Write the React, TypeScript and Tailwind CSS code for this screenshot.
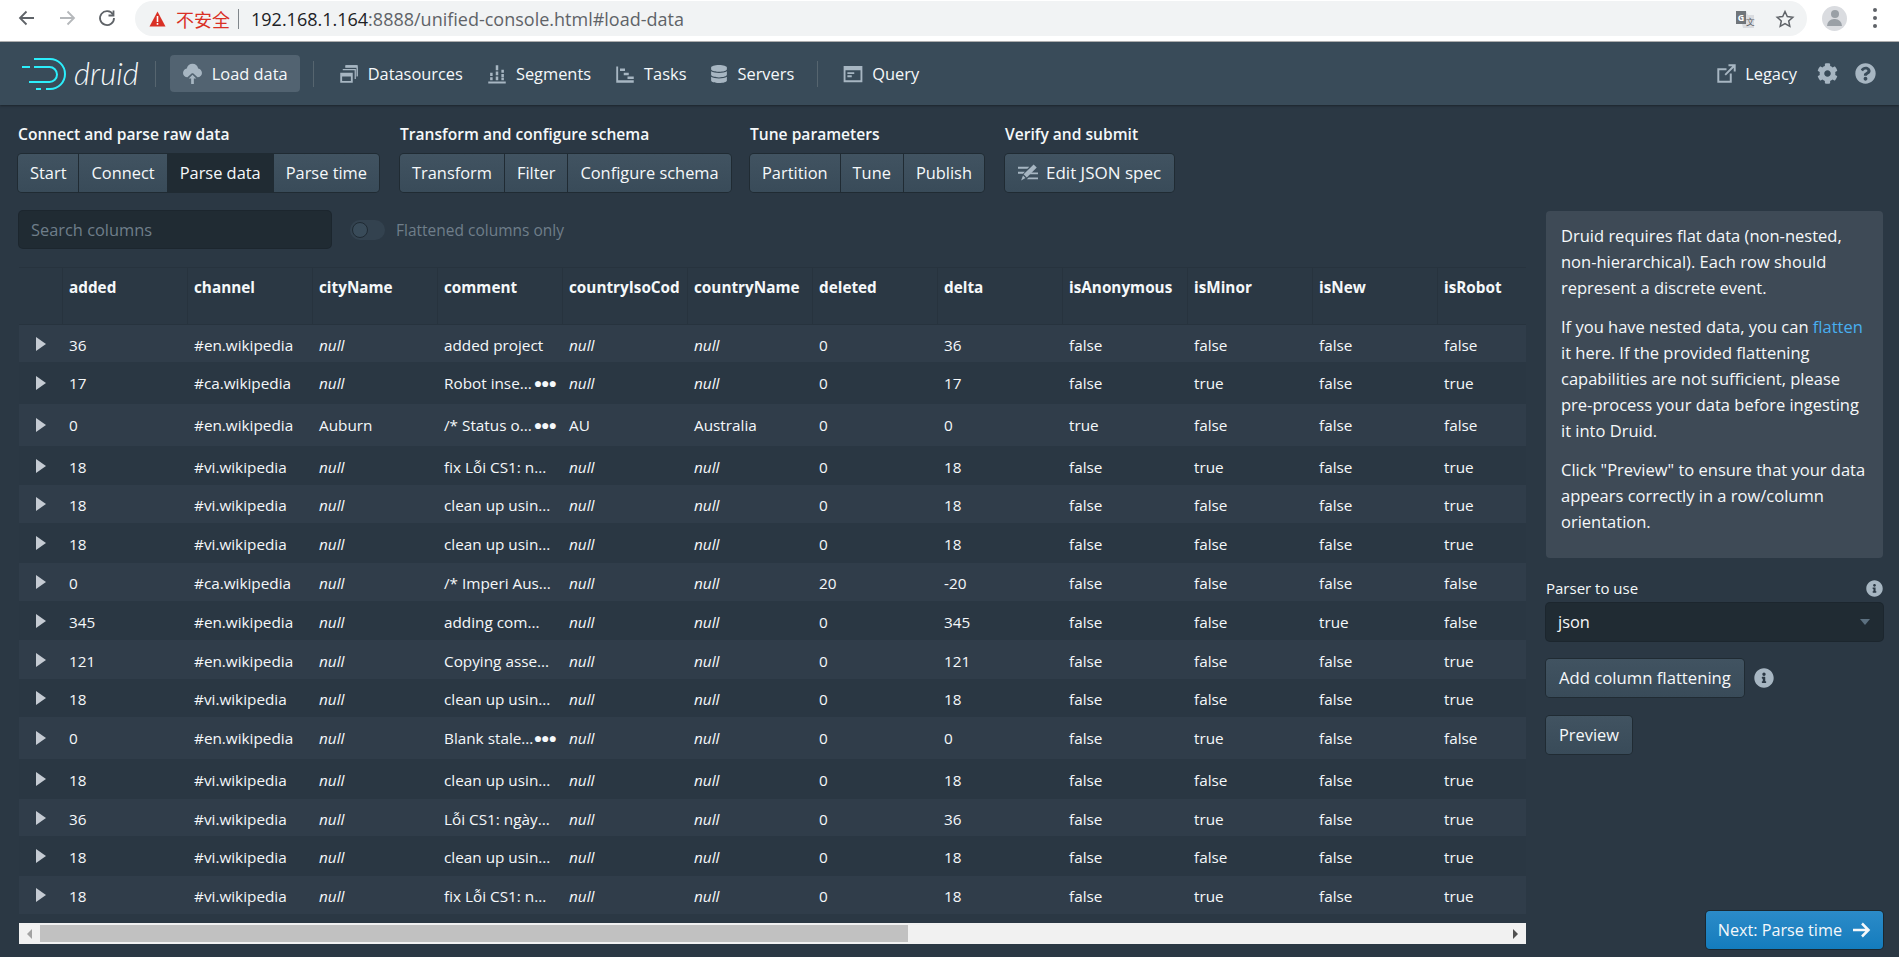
import { FaCog, FaDatabase, FaInfoCircle, FaQuestionCircle } from 'react-icons/fa'

const columns = ['added', 'channel', 'cityName', 'comment', 'countryIsoCod', 'countryName', 'deleted', 'delta', 'isAnonymous', 'isMinor', 'isNew', 'isRobot']

type Row = { h: string; c: string[]; more?: boolean }

const en = '#en.wikipedia'
const vi = '#vi.wikipedia'
const ca = '#ca.wikipedia'

const rows: Row[] = [
  { h: 'h-[37px]', c: ['36', en, 'null', 'added project', 'null', 'null', '0', '36', 'false', 'false', 'false', 'false'] },
  { h: 'h-[42px]', c: ['17', ca, 'null', 'Robot inse...', 'null', 'null', '0', '17', 'false', 'true', 'false', 'true'], more: true },
  { h: 'h-[42px]', c: ['0', en, 'Auburn', '/* Status o...', 'AU', 'Australia', '0', '0', 'true', 'false', 'false', 'false'], more: true },
  { h: 'h-[39px]', c: ['18', vi, 'null', 'fix Lỗi CS1: n...', 'null', 'null', '0', '18', 'false', 'true', 'false', 'true'] },
  { h: 'h-[38px]', c: ['18', vi, 'null', 'clean up usin...', 'null', 'null', '0', '18', 'false', 'false', 'false', 'true'] },
  { h: 'h-[40px]', c: ['18', vi, 'null', 'clean up usin...', 'null', 'null', '0', '18', 'false', 'false', 'false', 'true'] },
  { h: 'h-[38px]', c: ['0', ca, 'null', '/* Imperi Aus...', 'null', 'null', '20', '-20', 'false', 'false', 'false', 'false'] },
  { h: 'h-[39px]', c: ['345', en, 'null', 'adding com...', 'null', 'null', '0', '345', 'false', 'false', 'true', 'false'] },
  { h: 'h-[39px]', c: ['121', en, 'null', 'Copying asse...', 'null', 'null', '0', '121', 'false', 'false', 'false', 'true'] },
  { h: 'h-[38px]', c: ['18', vi, 'null', 'clean up usin...', 'null', 'null', '0', '18', 'false', 'false', 'false', 'true'] },
  { h: 'h-[42px]', c: ['0', en, 'null', 'Blank stale...', 'null', 'null', '0', '0', 'false', 'true', 'false', 'false'], more: true },
  { h: 'h-[40px]', c: ['18', vi, 'null', 'clean up usin...', 'null', 'null', '0', '18', 'false', 'false', 'false', 'true'] },
  { h: 'h-[37px]', c: ['36', vi, 'null', 'Lỗi CS1: ngày...', 'null', 'null', '0', '36', 'false', 'true', 'false', 'true'] },
  { h: 'h-[40px]', c: ['18', vi, 'null', 'clean up usin...', 'null', 'null', '0', '18', 'false', 'false', 'false', 'true'] },
  { h: 'h-[38px]', c: ['18', vi, 'null', 'fix Lỗi CS1: n...', 'null', 'null', '0', '18', 'false', 'true', 'false', 'true'] },
]

function DruidLogo() {
  return (
    <svg width="48" height="36" viewBox="0 0 48 36" fill="none" stroke="#2ceefb" strokeWidth="2">
      <path d="M14 3H30A15 15 0 0 1 30 33H26" />
      <path d="M2 11H10M14 11H29.5A7.5 7.5 0 0 1 29.5 26H9" />
      <path d="M16 33H21" />
    </svg>
  )
}

function CloudUp() {
  return (
    <svg width="21" height="21" viewBox="0.5 0.5 15 15.500" fill="#a7b6c2">
      <path d="M8 1C5.9 1 4.2 2.5 3.8 4.5 2.2 4.8 1 6.200 1 7.900 1 9.800 2.500 11 4.300 11L7.300 8.300C7.700 7.900 8.300 7.900 8.700 8.300L11.700 11C13.500 11 15 9.800 15 7.900 15 6.200 13.800 4.800 12.200 4.500 11.800 2.500 10.100 1 8 1Z" />
      <path d="M8 9.200L5.200 12H7V16H9V12H10.800Z" />
    </svg>
  )
}

function MultiSelect() {
  return (
    <svg width="20" height="20" viewBox="0 0 16 16" fill="#a7b6c2">
      <path fillRule="evenodd" d="M1 7H11V15H1ZM2.500 10V13.500H9.500V10Z" />
      <path d="M3 5H12.500V12H13.500V4H3ZM5.500 2.500H15V9.500H14.500V1H5.500Z" />
      <path d="M5 1H15V10H14V3H5Z" />
    </svg>
  )
}

function StackedChart() {
  return (
    <svg width="20" height="20" viewBox="0 0 16 16" fill="#a7b6c2">
      <path d="M7 1H9V5H7ZM7 6H9V9H7ZM7 10H9V13H7ZM2.500 7H4.500V9.500H2.500ZM2.500 10.500H4.500V13H2.500ZM11.500 4.500H13.500V7H11.500ZM11.500 8H13.500V10.500H11.500ZM11.500 11H13.500V13H11.500ZM1 14H15V15.500H1Z" />
    </svg>
  )
}

function Gantt() {
  return (
    <svg width="20" height="20" viewBox="0 0 16 16" fill="#a7b6c2">
      <path d="M1 2H2.500V13H15V15H1ZM4 3.500H8V5.500H4ZM7 7H11V9H7ZM10 10H15V12H10Z" />
    </svg>
  )
}

function AppIcon() {
  return (
    <svg width="20" height="20" viewBox="0 0 16 16" fill="#a7b6c2">
      <path fillRule="evenodd" d="M0.500 1.500H15.500V14.500H0.500ZM2 5V13H14V5ZM3.500 6.500H9V8H3.500ZM3.500 9H7V10.500H3.500Z" />
    </svg>
  )
}

function ShareIcon() {
  return (
    <svg width="21" height="21" viewBox="0 0 16 16" fill="#a7b6c2">
      <path d="M1 4H8V5.500H2.500V13.500H10.500V8H12V15H1Z" />
      <path d="M9.500 1H15V6.500H13.500V3.600L7.500 9.500 6.500 8.500 12.400 2.500H9.500Z" />
    </svg>
  )
}

function EditSpec() {
  return (
    <svg width="20" height="20" viewBox="0 0 16 16" fill="#a7b6c2">
      <path d="M0 3H9L7.500 4.500H0ZM0 7H5.500L4 8.500H0ZM8.500 11.500H16V13H7ZM10.500 7.500H16V9H9Z" />
      <path d="M12.500 1.200L15 3.500 7 11.500 4.500 9ZM4 10L6 12 2.500 14Z" />
    </svg>
  )
}

function NavItem({ icon, label, active }: { icon: React.ReactNode; label: string; active?: boolean }) {
  return (
    <div className={`flex h-[37px] items-center gap-[9px] rounded-[4px] px-[12px] ${active ? 'bg-[#526371]' : ''}`}>
      {icon}
      <span>{label}</span>
    </div>
  )
}

function Divider() {
  return <div className="h-[26px] w-px bg-[#56656f]" />
}

function StepGroup({ title, steps, active, className }: { title: string; steps: string[]; active?: string; className: string }) {
  return (
    <div className={className}>
      <div className="mb-[9px] h-[22px] text-[15.600px] leading-[22px] font-semibold text-[#f5f8fa]">{title}</div>
      <div className="flex h-[38px] w-fit overflow-hidden rounded-[4px] shadow-[0_0_0_1px_#202b33]">
        {steps.map((s) => (
          <div
            key={s}
            className={`flex items-center border-r border-[#202b33] px-[12px] last:border-r-0 ${
              s === active ? 'bg-[#202b33]' : 'bg-linear-to-b from-[#415361] to-[#394b59]'
            }`}
          >
            {s}
          </div>
        ))}
      </div>
    </div>
  )
}

function Btn({ children, className }: { children: React.ReactNode; className?: string }) {
  return (
    <div className={`flex h-[38px] items-center rounded-[4px] bg-linear-to-b from-[#415361] to-[#394b59] px-[13px] shadow-[0_0_0_1px_#202b33] ${className ?? ''}`}>
      {children}
    </div>
  )
}

function DataTable() {
  return (
    <div className="overflow-hidden text-[15.300px]">
      <div className="flex h-[58px] w-[1600px] border-y border-[#27333e] font-bold">
        <div className="w-[44px] shrink-0 border-r border-[#27333e]" />
        {columns.map((name) => (
          <div key={name} className="w-[125px] shrink-0 overflow-hidden border-r border-[#27333e] px-[6px] pt-[7px] whitespace-nowrap">
            {name}
          </div>
        ))}
      </div>
      {rows.map((row, i) => (
        <div key={i} className={`flex w-[1600px] items-center ${row.h} ${i % 2 === 0 ? 'bg-[#303d4a]' : 'bg-[#2a3743]'}`}>
          <div className="flex w-[44px] shrink-0 justify-center pr-[1px]">
            <div className="h-0 w-0 border-y-[7px] border-l-[10px] border-y-transparent border-l-[#c5cbd3]" />
          </div>
          {row.c.map((cell, j) => (
            <div key={j} className={`relative w-[125px] shrink-0 px-[6px] whitespace-nowrap ${row.more ? '' : 'pt-[2px]'} ${cell === 'null' ? 'italic' : ''}`}>
              {cell}
              {j === 3 && row.more ? <span className="absolute top-0 right-[7px] text-[14px] font-bold tracking-[-1px]">●●●</span> : null}
            </div>
          ))}
        </div>
      ))}
      <div className="mt-[9px] flex h-[21px] items-center bg-[#f1f1f1] py-[2px]">
        <div className="flex w-[21px] shrink-0 justify-center">
          <div className="h-0 w-0 border-y-[5px] border-r-[5px] border-y-transparent border-r-[#a3a3a3]" />
        </div>
        <div className="h-full w-[868px] bg-[#c1c1c1]" />
        <div className="flex-1" />
        <div className="flex w-[21px] shrink-0 justify-center">
          <div className="h-0 w-0 border-y-[5px] border-l-[5px] border-y-transparent border-l-[#505050]" />
        </div>
      </div>
    </div>
  )
}

export default function App() {
  return (
    <div className="flex h-[957px] w-[1899px] flex-col overflow-hidden bg-[#2b3844] font-['Open_Sans',sans-serif] text-[16.400px] leading-[24px] text-[#f5f8fa]">
      {/* browser chrome */}
      <div className="flex h-[42px] shrink-0 items-start border-b border-[#b8b8b8] bg-white text-[#5f6368]">
        <div className="flex h-[36px] w-[135px] items-center gap-[20px] pl-[17px]">
          <svg width="20" height="20" viewBox="0 0 20 20" fill="none" stroke="#5f6368" strokeWidth="1.800"><path d="M17 10H3.500M9.500 3.500L3 10l6.500 6.500" /></svg>
          <svg width="20" height="20" viewBox="0 0 20 20" fill="none" stroke="#b5b8bb" strokeWidth="1.800"><path d="M3 10H16.500M10.500 3.500L17 10l-6.500 6.500" /></svg>
          <svg width="20" height="20" viewBox="0 0 20 20" fill="none" stroke="#5f6368" strokeWidth="1.800"><path d="M16 6.500A7 7 0 1 0 17 10" /><path d="M16.500 2.500V7.500H11.500" /></svg>
        </div>
        <div className="mt-[1px] flex h-[35px] w-[1672px] items-center rounded-full bg-[#f1f3f4] pl-[14px] text-[18px]">
          <svg width="17" height="16" viewBox="0 0 17 16" fill="#d93025"><path d="M8.500 0.500L16.500 15.500H0.500Z" /><rect x="7.700" y="5" width="1.600" height="6" fill="#fff" /><rect x="7.700" y="12" width="1.600" height="1.800" fill="#fff" /></svg>
          <span className="ml-[10px] font-['Noto_Sans_CJK_SC',sans-serif] text-[#d93025]">不安全</span>
          <div className="mr-[12px] ml-[8px] h-[20px] w-px bg-[#80868b]" />
          <span className="text-[#202124]">192.168.1.164</span>
          <span>:8888/unified-console.html#load-data</span>
          <div className="ml-auto flex items-center gap-[20px] pr-[12px]">
            <svg width="20" height="20" viewBox="0 0 20 20"><path d="M1 2H11L13 6H19V19H8L7 15H1Z" fill="#dadce0" /><path d="M1 2H11V15H1Z" fill="#70757a" /><text x="6" y="12" fontSize="9" fontWeight="700" fill="#fff" textAnchor="middle">G</text><text x="15" y="16" fontSize="9" fill="#5f6368" textAnchor="middle">文</text></svg>
            <svg width="20" height="20" viewBox="0 0 20 20" fill="none" stroke="#5f6368" strokeWidth="1.500"><path d="M10 2.500L12.300 7.600 17.800 8.200 13.700 11.900 14.800 17.300 10 14.600 5.200 17.300 6.300 11.900 2.200 8.200 7.700 7.600Z" /></svg>
          </div>
        </div>
        <div className="ml-[15px] flex h-[36px] w-[25px] items-center justify-center">
          <div className="flex h-[25px] w-[25px] flex-col items-center justify-center gap-[1px] overflow-hidden rounded-full bg-[#dadce0]">
            <div className="h-[8px] w-[8px] rounded-full bg-[#9aa0a6]" />
            <div className="h-[7px] w-[15px] rounded-t-full bg-[#9aa0a6]" />
          </div>
        </div>
        <div className="ml-[26px] flex h-[36px] flex-col items-center justify-center gap-[4px]">
          <div className="h-[4px] w-[4px] rounded-full bg-[#5f6368]" />
          <div className="h-[4px] w-[4px] rounded-full bg-[#5f6368]" />
          <div className="h-[4px] w-[4px] rounded-full bg-[#5f6368]" />
        </div>
      </div>

      {/* navbar */}
      <div className="z-10 flex h-[63px] shrink-0 items-center bg-[#394b59] pr-[23px] pl-[20px] shadow-[0_1px_2px_#1c252d]">
        <DruidLogo />
        <span className="ml-[6px] font-['Lato',sans-serif] text-[31px] leading-none font-light italic">druid</span>
        <div className="mr-[14px] ml-[16px]"><Divider /></div>
        <NavItem active icon={<CloudUp />} label="Load data" />
        <div className="mr-[13px] ml-[13px]"><Divider /></div>
        <NavItem icon={<MultiSelect />} label="Datasources" />
        <NavItem icon={<StackedChart />} label="Segments" />
        <NavItem icon={<Gantt />} label="Tasks" />
        <NavItem icon={<FaDatabase size={18} color="#a7b6c2" />} label="Servers" />
        <div className="mr-[13px] ml-[11px]"><Divider /></div>
        <NavItem icon={<AppIcon />} label="Query" />
        <div className="ml-auto flex items-center">
          <div className="mr-[20px] flex items-center gap-2"><ShareIcon /><span>Legacy</span></div>
          <FaCog size={21} color="#a7b6c2" />
          <div className="ml-[17px]"><FaQuestionCircle size={21} color="#a7b6c2" /></div>
        </div>
      </div>

      {/* steps */}
      <div className="flex shrink-0 pt-[18px] pl-[18px]">
        <StepGroup className="w-[382px]" title="Connect and parse raw data" steps={['Start', 'Connect', 'Parse data', 'Parse time']} active="Parse data" />
        <StepGroup className="w-[350px]" title="Transform and configure schema" steps={['Transform', 'Filter', 'Configure schema']} />
        <StepGroup className="w-[255px]" title="Tune parameters" steps={['Partition', 'Tune', 'Publish']} />
        <div>
          <div className="mb-[9px] h-[22px] text-[15.600px] leading-[22px] font-semibold">Verify and submit</div>
          <Btn className="gap-2 text-[17px]"><EditSpec />Edit JSON spec</Btn>
        </div>
      </div>

      {/* main */}
      <div className="flex min-h-0 flex-1 pt-[19px] pr-[16px] pl-[19px]">
        <div className="w-[1507px] shrink-0">
          <div className="flex h-[37px] items-center">
            <div className="flex h-[37px] w-[312px] items-center rounded-[4px] bg-[#202b33] px-[12px] text-[#6f7e8a] shadow-[0_0_0_1px_#1c262e]">Search columns</div>
            <div className="ml-[19px] flex h-[20px] w-[35px] items-center rounded-full bg-[#33424f] pl-[2px]">
              <div className="h-[16px] w-[16px] rounded-full border border-[#1f2a33] bg-[#394b59]" />
            </div>
            <span className="ml-[11px] text-[15.500px] text-[#6f7e8a]">Flattened columns only</span>
          </div>
          <div className="mt-[19px]"><DataTable /></div>
        </div>

        <div className="ml-[20px] flex w-[337px] shrink-0 flex-col">
          <div className="flex h-[347px] flex-col gap-[13px] rounded-[4px] bg-[#3e4a56] px-[15px] pt-[12px] text-[16.500px] leading-[26px]">
            <p>Druid requires flat data (non-nested, non-hierarchical). Each row should represent a discrete event.</p>
            <p>If you have nested data, you can <span className="text-[#48aff0]">flatten</span> it here. If the provided flattening capabilities are not sufficient, please pre-process your data before ingesting it into Druid.</p>
            <p>Click "Preview" to ensure that your data appears correctly in a row/column orientation.</p>
          </div>
          <div className="mt-[17px] flex h-[26px] items-center justify-between text-[15px]">
            <span>Parser to use</span>
            <FaInfoCircle size={17} color="#a7b6c2" />
          </div>
          <div className="mt-[2px] flex h-[38px] items-center justify-between rounded-[4px] bg-[#202b33] px-[12px] shadow-[0_0_0_1px_#1c262e]">
            <span>json</span>
            <div className="mr-[1px] h-0 w-0 border-x-[5px] border-t-[6px] border-x-transparent border-t-[#5c7080]" />
          </div>
          <div className="mt-[18px] flex items-center gap-[10px]">
            <Btn className="text-[16.700px]">Add column flattening</Btn>
            <FaInfoCircle size={20} color="#a7b6c2" />
          </div>
          <div className="mt-[19px] flex">
            <Btn className="px-[12px]">Preview</Btn>
          </div>
          <div className="mt-[157px] flex justify-end">
            <div className="flex h-[38px] items-center gap-[9px] rounded-[4px] bg-linear-to-b from-[#2b8bc8] to-[#137cbd] px-[12px] text-[16.200px] shadow-[0_0_0_1px_#1b2830]">
              Next: Parse time
              <svg width="20" height="20" viewBox="0 0 20 20" fill="none" stroke="#f5f8fa" strokeWidth="2.500"><path d="M2 10H17M11 3.500L17.500 10 11 16.500" /></svg>
            </div>
          </div>
        </div>
      </div>
    </div>
  )
}
